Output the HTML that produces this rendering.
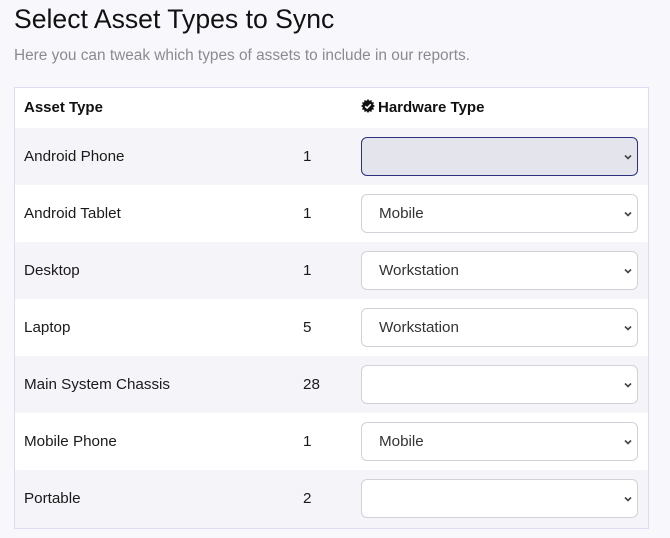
<!DOCTYPE html>
<html><head><meta charset="utf-8">
<style>
html,body{margin:0;padding:0}
body{width:670px;height:538px;background:#f8f8fc;font-family:"Liberation Sans",sans-serif;position:relative;overflow:hidden}
.t{position:absolute;left:14px;top:4px;font-size:26.6px;color:#111}
.s{position:absolute;left:14px;top:47px;font-size:15.4px;color:#8a8a90}
.tbl{position:absolute;left:14px;top:87px;width:633px;height:440px;border:1px solid #dddcf3;background:#fff}
.h{position:absolute;top:0;height:40px;line-height:40px;font-weight:bold;font-size:15px;color:#111}
.r{position:absolute;left:0;width:633px;height:57px}
.r.g{background:#f4f4f9}
.n{position:absolute;left:9px;top:0;line-height:57px;font-size:15.2px;color:#1a1a1a}
.c{position:absolute;left:288px;top:0;line-height:57px;font-size:15.2px;color:#1a1a1a}
.sel{position:absolute;left:346px;top:9px;width:277px;height:39px;box-sizing:border-box;border:1px solid #cfd2d8;border-radius:6px;background:#fff;font-size:15.2px;color:#333;line-height:37px;padding-left:17px}
.sel.f{background:#e3e4ec;border:1px solid #2c3280}
.sel svg{position:absolute;right:4px;top:14px}
</style></head><body>
<div class="t">Select Asset Types to Sync</div>
<div class="s">Here you can tweak which types of assets to include in our reports.</div>
<div class="tbl">
<div class="h" style="left:9px">Asset Type</div>
<div class="h" style="left:346px"><svg width="14" height="14" viewBox="0 0 16 16" style="vertical-align:-1px;margin-right:3px"><polygon fill="#111" points="8,0 9.6,2.2 12,1.1 12.3,3.7 14.9,4 13.8,6.4 16,8 13.8,9.6 14.9,12 12.3,12.3 12,14.9 9.6,13.8 8,16 6.4,13.8 4,14.9 3.7,12.3 1.1,12 2.2,9.6 0,8 2.2,6.4 1.1,4 3.7,3.7 4,1.1 6.4,2.2"/><path d="M4.8 8.2l2.2 2.2 4.2-4.4" stroke="#fff" stroke-width="1.8" fill="none"/></svg>Hardware Type</div>

<div class="r g" style="top:40px"><div class="n">Android Phone</div><div class="c">1</div><div class="sel f"><svg width="10" height="10" viewBox="0 0 10 10"><path d="M2 3.5l3 3 3-3" stroke="#444" stroke-width="1.6" fill="none"/></svg></div></div>
<div class="r" style="top:97px"><div class="n">Android Tablet</div><div class="c">1</div><div class="sel">Mobile<svg width="10" height="10" viewBox="0 0 10 10"><path d="M2 3.5l3 3 3-3" stroke="#444" stroke-width="1.6" fill="none"/></svg></div></div>
<div class="r g" style="top:154px"><div class="n">Desktop</div><div class="c">1</div><div class="sel">Workstation<svg width="10" height="10" viewBox="0 0 10 10"><path d="M2 3.5l3 3 3-3" stroke="#444" stroke-width="1.6" fill="none"/></svg></div></div>
<div class="r" style="top:211px"><div class="n">Laptop</div><div class="c">5</div><div class="sel">Workstation<svg width="10" height="10" viewBox="0 0 10 10"><path d="M2 3.5l3 3 3-3" stroke="#444" stroke-width="1.6" fill="none"/></svg></div></div>
<div class="r g" style="top:268px"><div class="n">Main System Chassis</div><div class="c">28</div><div class="sel"><svg width="10" height="10" viewBox="0 0 10 10"><path d="M2 3.5l3 3 3-3" stroke="#444" stroke-width="1.6" fill="none"/></svg></div></div>
<div class="r" style="top:325px"><div class="n">Mobile Phone</div><div class="c">1</div><div class="sel">Mobile<svg width="10" height="10" viewBox="0 0 10 10"><path d="M2 3.5l3 3 3-3" stroke="#444" stroke-width="1.6" fill="none"/></svg></div></div>
<div class="r g" style="top:382px;height:58px"><div class="n">Portable</div><div class="c">2</div><div class="sel"><svg width="10" height="10" viewBox="0 0 10 10"><path d="M2 3.5l3 3 3-3" stroke="#444" stroke-width="1.6" fill="none"/></svg></div></div>
</div>
</body></html>
